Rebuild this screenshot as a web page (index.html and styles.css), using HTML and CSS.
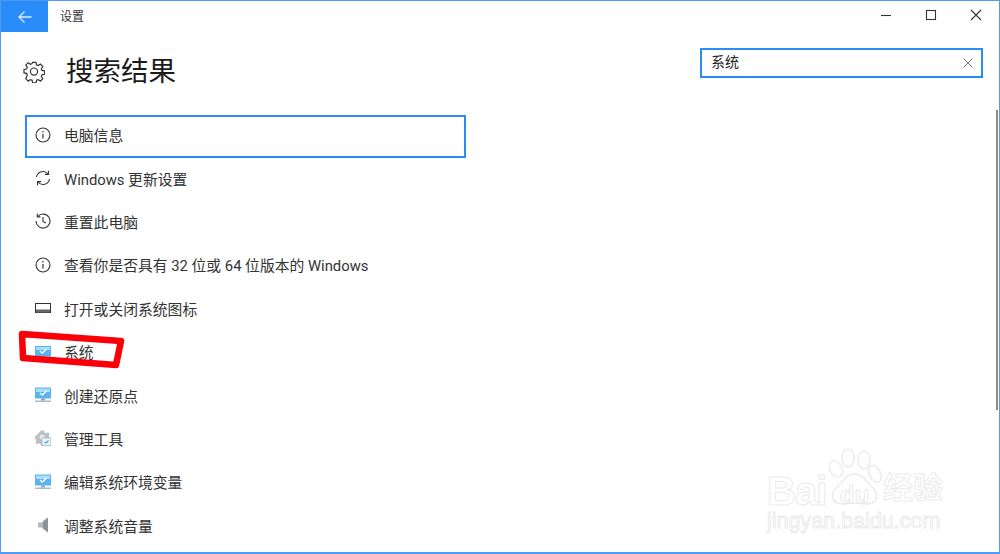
FILE: index.html
```html
<!DOCTYPE html>
<html lang="zh-CN">
<head>
<meta charset="utf-8">
<title>设置</title>
<link rel="stylesheet" href="styles.css">
</head>
<body>
<div class="window">
  <header class="titlebar">
    <div class="back"><svg width="14" height="12" viewBox="0 0 14 12"><path d="M6.500.5 1 6 6.500 11.500M1 6H13.500" fill="none" stroke="#d8ebff" stroke-width="1.3"/></svg></div>
    <div class="apptitle">设置</div>
    <div class="controls">
      <svg width="12" height="12" viewBox="0 0 12 12"><path d="M1 6.500H11" stroke="#333" stroke-width="1.100"/></svg>
      <svg width="12" height="12" viewBox="0 0 12 12"><rect x="1.500" y="1.500" width="9" height="9" fill="none" stroke="#333" stroke-width="1.100"/></svg>
      <svg width="12" height="12" viewBox="0 0 12 12"><path d="M1 1 11 11M11 1 1 11" stroke="#333" stroke-width="1.100"/></svg>
    </div>
  </header>
  <div class="head">
    <div class="heading">
      <svg class="gear" width="22" height="22" viewBox="0 0 22 22"><path d="M9.300 1.500h3.400l.5 2.600 1.700.7 2.200-1.500 2.400 2.400-1.500 2.200.7 1.700 2.600.5v3.400l-2.600.5-.7 1.700 1.500 2.200-2.400 2.400-2.200-1.500-1.700.7-.5 2.600H9.300l-.5-2.600-1.700-.7-2.200 1.500-2.400-2.400L4 14.300l-.7-1.700-2.600-.5V8.700l2.600-.5.7-1.700-1.500-2.200 2.400-2.400 2.200 1.500 1.700-.7z" fill="none" stroke="#333" stroke-width="1.200" transform="translate(.3 -.2)"/><circle cx="11" cy="10.600" r="3.600" fill="none" stroke="#333" stroke-width="1.200"/></svg>
      <h1>搜索结果</h1>
    </div>
    <div class="search"><span>系统</span><svg width="10" height="10" viewBox="0 0 10 10"><path d="M.5.5 9.500 9.500M9.500.5 .5 9.500" stroke="#777" stroke-width="1"/></svg></div>
  </div>
  <ul class="results">
    <li class="row selected"><svg class="ico" width="16" height="16" viewBox="0 0 16 16"><circle cx="8" cy="8" r="7" fill="none" stroke="#333" stroke-width="1.100"/><path d="M8 7v4.500" stroke="#333" stroke-width="1.200"/><circle cx="8" cy="4.800" r=".8" fill="#333"/></svg><span>电脑信息</span></li>
    <li class="row"><svg class="ico" width="16" height="16" viewBox="0 0 16 16"><path d="M1.500 7A6.500 6.500 0 0 1 13 4M14.500 9A6.500 6.500 0 0 1 3 12" fill="none" stroke="#333" stroke-width="1.100"/><path d="M13.500 .8V4.400H9.900M2.500 15.200V11.600H6.100" fill="none" stroke="#333" stroke-width="1.100"/></svg><span>Windows 更新设置</span></li>
    <li class="row"><svg class="ico" width="16" height="16" viewBox="0 0 16 16"><path d="M2.700 3.500A7 7 0 1 1 1 8" fill="none" stroke="#333" stroke-width="1.100"/><path d="M2.300 .8V3.900H5.400M8 4v4.500l3 1.500" fill="none" stroke="#333" stroke-width="1.100"/></svg><span>重置此电脑</span></li>
    <li class="row"><svg class="ico" width="16" height="16" viewBox="0 0 16 16"><circle cx="8" cy="8" r="7" fill="none" stroke="#333" stroke-width="1.100"/><path d="M8 7v4.500" stroke="#333" stroke-width="1.200"/><circle cx="8" cy="4.800" r=".8" fill="#333"/></svg><span>查看你是否具有 32 位或 64 位版本的 Windows</span></li>
    <li class="row"><svg class="ico" width="16" height="16" viewBox="0 0 16 16"><rect x=".5" y="3.500" width="15" height="9" fill="none" stroke="#333" stroke-width="1"/><rect x="1" y="9.500" width="14" height="3" fill="#666"/></svg><span>打开或关闭系统图标</span></li>
    <li class="row"><svg class="ico" width="16" height="16" viewBox="0 0 16 16"><rect x="0" y="2" width="16" height="10" fill="#59b4ee"/><rect x="1" y="3" width="14" height="3" fill="#a8dcfa"/><path d="M5 7l2.300 2L11.500 5" fill="none" stroke="#fff" stroke-width="1.300"/><rect x="0" y="12" width="16" height="1.500" fill="#a9bccb"/></svg><span>系统</span></li>
    <li class="row"><svg class="ico" width="16" height="16" viewBox="0 0 16 16"><rect x="0" y="0.5" width="16" height="11" fill="#59b4ee"/><rect x="1" y="1.500" width="14" height="3.500" fill="#a8dcfa"/><path d="M5 6l2.300 2L11.500 4" fill="none" stroke="#fff" stroke-width="1.300"/><path d="M6 11.500h4v2H6z" fill="#8fa3b3"/><rect x="0" y="13.500" width="16" height="1.500" fill="#a9bccb"/></svg><span>创建还原点</span></li>
    <li class="row"><svg class="ico" width="16" height="16" viewBox="0 0 16 16"><path d="M5 .5h3l.4 2 1.600.7 1.700-1 2 2-1 1.700.6 1.600 2 .4v3H8v5H5l-.4-2-1.600-.7-1.700 1-2-2 1-1.700-.6-1.600-2-.4" fill="#b9bfc4" transform="translate(1)"/><circle cx="7" cy="7" r="2.500" fill="#e6e8ea"/><rect x="7" y="8" width="9" height="7.500" fill="#eef4f9" stroke="#a4b4c2" stroke-width=".8"/><path d="M9.500 12l1.500 1 2.500-2.500" fill="none" stroke="#4aa3e0" stroke-width="1.200"/></svg><span>管理工具</span></li>
    <li class="row"><svg class="ico" width="16" height="16" viewBox="0 0 16 16"><rect x="0" y="0.5" width="16" height="11" fill="#59b4ee"/><rect x="1" y="1.500" width="14" height="3.500" fill="#a8dcfa"/><path d="M5 6l2.300 2L11.500 4" fill="none" stroke="#fff" stroke-width="1.300"/><path d="M6 11.500h4v2H6z" fill="#8fa3b3"/><rect x="0" y="13.500" width="16" height="1.500" fill="#a9bccb"/></svg><span>编辑系统环境变量</span></li>
    <li class="row"><svg class="ico" width="16" height="16" viewBox="0 0 16 16"><path d="M3 5.500h3.500L13 .5v15L6.500 10.500H3z" fill="#b4bbc0"/><path d="M8 4.500 13 .5v15L8 11.500z" fill="#8b949b"/></svg><span>调整系统音量</span></li>
  </ul>
  <div class="scrollbar"></div>
  <svg class="annotation" width="130" height="50" viewBox="0 0 130 50"><path d="M6 5 105 12 100 36 7 29Z" fill="none" stroke="#fb0008" stroke-width="6.500" stroke-linejoin="round"/></svg>
  <div class="watermark">
    <svg class="paw" width="58" height="58" viewBox="0 0 58 58"><g fill="#fff" stroke="#ebebeb" stroke-width="1.500"><ellipse cx="7" cy="21" rx="6" ry="8.500" transform="rotate(-30 7 21)"/><ellipse cx="19" cy="10" rx="6" ry="9"/><ellipse cx="35" cy="12" rx="6" ry="9"/><ellipse cx="46" cy="26" rx="5.500" ry="9" transform="rotate(-25 46 26)"/><path d="M26 26c8 0 11 7 16 12 8 7 8 18-4 18-4 0-8-1-12-1s-8 1-12 1C2 56 0 45 9 38c6-5 8-12 17-12z"/></g></svg>
    <span class="wm-bai">Bai</span><span class="wm-du">du</span><span class="wm-jy">经验</span>
    <span class="wm-url">jingyan.baidu.com</span>
  </div>
</div>
</body>
</html>
```
FILE: styles.css
```css
* { box-sizing: border-box; }
html, body { margin: 0; padding: 0; height: 100%; overflow: hidden; background: #fff; }
body { font-family: Roboto, "Noto Sans CJK SC", sans-serif; color: #2a2a2a; }
.window {
  position: relative;
  width: 1000px;
  height: 554px;
  border: 1px solid #4a9cf6;
  border-width: 1px 1px 2px 1px;
  overflow: hidden;
}
.titlebar { display: flex; align-items: center; height: 31px; }
.back {
  width: 47px; height: 31px; background: #2a8cf8;
  display: flex; align-items: center; justify-content: center;
}
.apptitle { margin-left: 12px; font-size: 12px; color: #333; margin-bottom: 3px; }
.controls { margin-left: auto; display: flex; gap: 33px; padding-right: 17px; margin-bottom: 3px; }
.controls svg { display: block; }
.head {
  display: flex; justify-content: space-between; align-items: flex-start;
  height: 83px; padding: 16px 16px 0 22px;
}
.heading { display: flex; align-items: center; gap: 21px; margin-top: 4px; }
.gear { display: block; }
h1 { margin: 0; font-size: 27.500px; font-weight: 400; line-height: 40px; color: #1c1c1c; }
.search {
  width: 283px; height: 30px; border: 2px solid #2a8cf8;
  display: flex; align-items: center; justify-content: space-between;
  padding: 0 8px 0 9px; font-size: 14px; color: #222;
}
.search span { margin-bottom: 4px; }
.search svg { display: block; }
.results { list-style: none; margin: 0; padding: 0 0 0 24px; display: flex; flex-direction: column; }
.row {
  height: 43.400px; width: 441px; display: flex; align-items: center;
  padding: 0 0 4px 10px; gap: 13px; font-size: 14.800px; color: #333; white-space: nowrap;
}
.ico { flex: none; display: block; }
.selected { border: 2px solid #2a8cf8; padding-left: 8px; padding-bottom: 4px; }
.scrollbar { position: absolute; right: 1px; top: 109px; width: 2px; height: 300px; background: #8a8a8a; }
.annotation { position: absolute; left: 15px; top: 328px; }
.watermark { position: absolute; left: 765px; top: 446px; width: 190px; height: 100px; color: #fff; }
.watermark span { position: absolute; -webkit-text-stroke: 1px #ebebeb; font-family: "Liberation Sans", "Noto Sans CJK SC", sans-serif; line-height: 1; }
.paw { position: absolute; left: 63px; top: 1px; }
.wm-bai { left: 1px; top: 24px; font-size: 40px; font-weight: 700; letter-spacing: -1px; }
.wm-du { left: 74px; top: 36px; font-size: 24px; font-weight: 700; }
.wm-jy { left: 117px; top: 26px; font-size: 30px; font-weight: 700; }
.wm-url { left: 1px; top: 64px; font-size: 21.500px; }
```
